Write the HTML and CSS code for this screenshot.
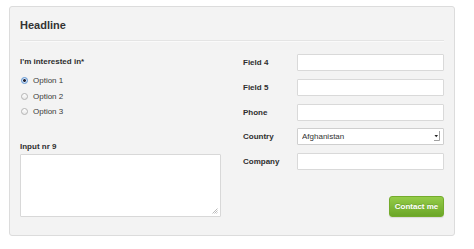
FILE: index.html
```html
<!DOCTYPE html>
<html>
<head>
<meta charset="utf-8">
<link rel="stylesheet" href="styles.css">
</head>
<body>
<form class="panel">
  <h1 class="headline">Headline</h1>
  <div class="divider"></div>
  <div class="columns">
    <div class="col-left">
      <div class="label group-label">I'm interested in*</div>
      <div class="options">
        <label class="option"><input type="radio" name="opt" class="radio" checked><span>Option 1</span></label>
        <label class="option"><input type="radio" name="opt" class="radio"><span>Option 2</span></label>
        <label class="option"><input type="radio" name="opt" class="radio"><span>Option 3</span></label>
      </div>
      <div class="label area-label">Input nr 9</div>
      <div class="area-wrap">
        <textarea class="area"></textarea>
        <svg class="grip" width="6" height="6" viewBox="0 0 6 6">
          <path d="M5.5 0.5 L0.5 5.5 M5.5 2.5 L2.5 5.5 M5.5 4.5 L4.5 5.5" stroke="#a8a8a8" stroke-width="0.8" fill="none"/>
        </svg>
      </div>
    </div>
    <div class="col-right">
      <div class="row"><span class="label">Field 4</span><input class="field" type="text"></div>
      <div class="row"><span class="label">Field 5</span><input class="field" type="text"></div>
      <div class="row"><span class="label">Phone</span><input class="field" type="text"></div>
      <div class="row"><span class="label">Country</span>
        <div class="select-wrap">
          <select class="field select"><option>Afghanistan</option></select>
          <svg class="select-arrow" width="8" height="12" viewBox="0 0 8 12">
            <path d="M1.5 5 L5 5 L3.25 7.2 Z" fill="#222"/>
            <path d="M6.5 1 L6.5 10.5 L1 10.5" fill="none" stroke="#a0a0a0" stroke-width="1"/>
          </svg>
        </div>
      </div>
      <div class="row"><span class="label">Company</span><input class="field" type="text"></div>
      <div class="actions"><button type="button" class="btn">Contact me</button></div>
    </div>
  </div>
</form>
</body>
</html>
```
FILE: styles.css
```css
html, body {
  margin: 0;
  padding: 0;
  background: #ffffff;
}
body {
  font-family: "Liberation Sans", Arial, sans-serif;
  color: #333;
}
.panel {
  box-sizing: border-box;
  width: 446px;
  margin: 6px 0 0 9px;
  padding: 11px 10px 18px;
  background: #f3f3f3;
  border: 1px solid #dcdcdc;
  border-radius: 3px;
}
.headline {
  margin: 0 0 8px;
  font-size: 11px;
  line-height: 14px;
  font-weight: bold;
  color: #333;
}
.divider {
  height: 0;
  border-top: 1px solid #e4e4e4;
  border-bottom: 1px solid #fafafa;
}
.columns {
  display: grid;
  grid-template-columns: 201px 201px;
  column-gap: 22px;
  margin-top: 12px;
}
.label {
  font-size: 8px;
  font-weight: bold;
  color: #2e2e2e;
}
.group-label {
  line-height: 16px;
}
.options {
  margin-top: 3px;
}
.option {
  display: flex;
  align-items: center;
  height: 15.5px;
  font-size: 8px;
  color: #3a3a3a;
}
.radio {
  -webkit-appearance: none;
  appearance: none;
  box-sizing: border-box;
  width: 7px;
  height: 7px;
  margin: 0 5px 0 1px;
  border: 1px solid #b4b4b4;
  border-radius: 50%;
  background: linear-gradient(#ffffff, #e8e8e8);
}
.radio:checked {
  border-color: #5f95d3;
  background: radial-gradient(circle, #223 0, #223 1.2px, #dbe8f7 1.6px, #b9d1ee 100%);
}
.area-label {
  margin-top: 20.5px;
  line-height: 14px;
}
.area-wrap {
  position: relative;
  width: 201px;
  height: 63px;
}
.area {
  display: block;
  box-sizing: border-box;
  width: 201px;
  height: 63px;
  margin: 0;
  border: 1px solid #d8d8d8;
  border-radius: 1px;
  background: #fff;
  resize: none;
  outline: none;
}
.grip {
  position: absolute;
  right: 3px;
  bottom: 3px;
}
.row {
  display: grid;
  grid-template-columns: 54px 147px;
  align-items: center;
  height: 17px;
  margin-bottom: 7.75px;
}
.field {
  display: block;
  box-sizing: border-box;
  width: 147px;
  height: 17px;
  margin: 0;
  padding: 0 4px;
  border: 1px solid #d9d9d9;
  border-radius: 1px;
  background: #fff;
  font-family: "Liberation Sans", Arial, sans-serif;
  font-size: 8px;
  color: #333;
  outline: none;
}
.select-wrap {
  position: relative;
  width: 147px;
  height: 17px;
}
.select {
  -webkit-appearance: none;
  appearance: none;
  border-color: #cfcfcf;
  padding-left: 4px;
}
.select-arrow {
  position: absolute;
  right: 3px;
  top: 2px;
  pointer-events: none;
}
.actions {
  display: flex;
  justify-content: flex-end;
  padding-top: 18.25px;
}
.btn {
  box-sizing: border-box;
  width: 55px;
  height: 21px;
  padding: 0;
  border: 1px solid #74ab2c;
  border-radius: 3px;
  background: linear-gradient(#94cc48, #6ba628);
  color: #fff;
  font-family: "Liberation Sans", Arial, sans-serif;
  font-size: 8px;
  font-weight: bold;
  text-shadow: 0 -1px 0 rgba(0, 0, 0, 0.15);
  box-shadow: 0 1px 1px rgba(0, 0, 0, 0.1);
}
```
